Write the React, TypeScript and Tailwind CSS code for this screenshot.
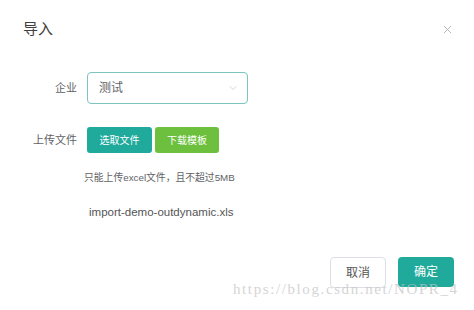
import { ChevronDown, X } from 'lucide-react'

export default function App() {
  return (
    <div className="relative w-[474px] h-[310px] overflow-hidden bg-white font-['Liberation_Sans','Noto_Sans_CJK_SC',sans-serif] text-[#606266]">
      {/* Header */}
      <div className="flex items-center justify-between pl-[23px] pr-[20px] pt-[19px]">
        <span className="text-[15px] leading-[20px] text-[#404040]">导入</span>
        <X className="h-[13px] w-[13px] text-[#a8a8a8]" strokeWidth={1.5} />
      </div>

      {/* Form */}
      <div className="mt-[33px] flex flex-col">
        <div className="flex items-center">
          <label className="w-[87px] pr-[10px] text-right text-[11px]">企业</label>
          <div className="flex h-[32px] w-[161px] items-center justify-between rounded-[4px] border border-[#7cc4bc] pl-[11px] pr-[8px]">
            <span className="text-[12px] text-[#606266]">测试</span>
            <ChevronDown className="h-[12px] w-[12px] text-[#c8c8c8]" strokeWidth={1.5} />
          </div>
        </div>

        <div className="mt-[23px] flex items-center">
          <label className="w-[87px] pr-[10px] text-right text-[11px]">上传文件</label>
          <div className="flex gap-[3px]">
            <button className="h-[26px] w-[65px] rounded-[3px] bg-[#20aa9c] text-[10px] text-white">选取文件</button>
            <button className="h-[26px] w-[64px] rounded-[3px] bg-[#6cc03e] text-[10px] text-white">下载模板</button>
          </div>
        </div>

        <div className="mt-[18px] pl-[84px] text-[9.8px] leading-[14px] text-[#606266]">
          只能上传excel文件，且不超过5MB
        </div>
        <div className="mt-[19px] pl-[89px] text-[11.5px] leading-[16px] text-[#555]">
          import-demo-outdynamic.xls
        </div>
      </div>

      {/* Footer */}
      <div className="absolute right-[20px] top-[257px] flex gap-[12px]">
        <button className="h-[31px] w-[56px] rounded-[4px] border border-[#dcdfe6] bg-white text-[12px] text-[#555]">取消</button>
        <button className="h-[30px] w-[56px] rounded-[4px] bg-[#20aa9c] text-[12px] text-white">确定</button>
      </div>

      {/* Watermark */}
      <div className="pointer-events-none absolute left-[233px] top-[278px] font-['Liberation_Serif',serif] text-[15px] tracking-[1.6px] text-[#c4c4c4] opacity-70">
        https://blog.csdn.net/NOPR_4
      </div>
    </div>
  )
}
